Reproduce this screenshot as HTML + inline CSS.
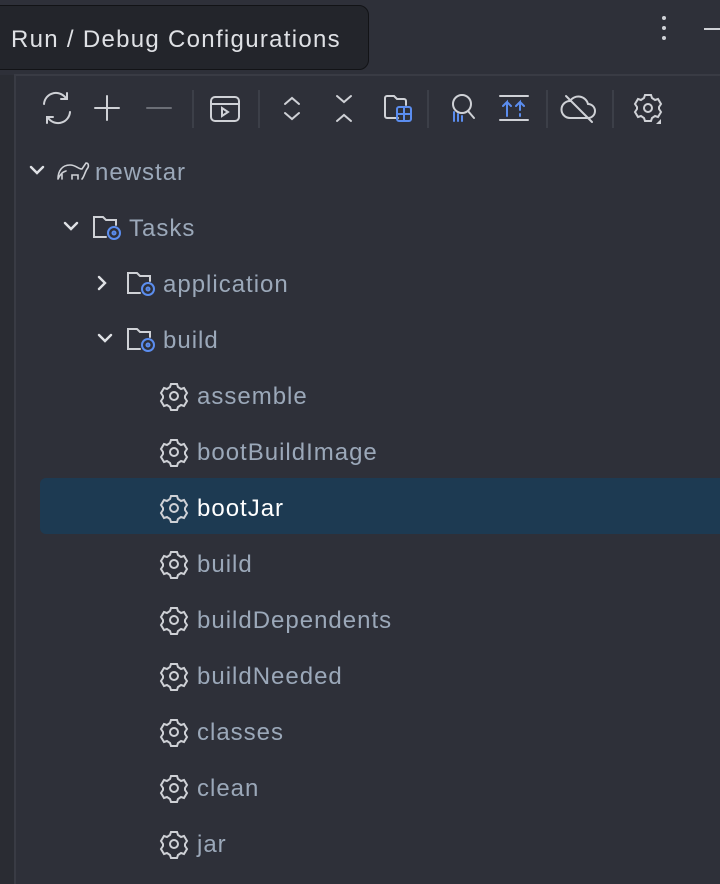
<!DOCTYPE html><html><head><style>
body{margin:0;width:720px;height:884px;background:#2e3039;font-family:"Liberation Sans",sans-serif;overflow:hidden;position:relative}
.strip{position:absolute;left:0;top:75px;width:14px;height:809px;background:#2a2c33;border-right:2px solid #393b44}
.tip{position:absolute;left:-10px;top:5px;width:379px;height:65px;background:#23252b;border:1px solid #121316;border-radius:10px;color:#dfe1e5;font-size:24px;letter-spacing:1.3px;line-height:68px;padding-left:20px;box-sizing:border-box}
.hline{position:absolute;left:14px;right:0;top:74px;height:2px;background:#393b44}
.row{position:absolute;left:0;width:720px;height:56px;color:#9ba8b9;font-size:24px;letter-spacing:1px;line-height:60px}
.row span{position:absolute}
.sel{background:#1d3a52;left:40px;width:680px;border-radius:6px 0 0 6px}
svg{position:absolute}
.sep{position:absolute;top:90px;width:2px;height:38px;background:#3c3f48}
</style></head><body>
<div class="strip"></div>
<div class="hline"></div>
<div class="tip">Run / Debug Configurations</div>
<div style="position:absolute;left:662px;top:16px;color:#ccc"><div style="width:4px;height:4px;border-radius:2px;background:#cfd1d6;margin-bottom:6px"></div><div style="width:4px;height:4px;border-radius:2px;background:#cfd1d6;margin-bottom:6px"></div><div style="width:4px;height:4px;border-radius:2px;background:#cfd1d6"></div></div>
<div style="position:absolute;left:704px;top:28px;width:16px;height:2px;background:#cfd1d6"></div>
<svg width="720" height="140" style="left:0;top:0" fill="none" stroke="#cfd1d6" stroke-width="2" stroke-linecap="round">
<path d="M44 104a12 12 0 0 1 20-8l3 3M70 112a12 12 0 0 1-20 8l-3-3M67 93v6h-6M47 123v-6h6"/>
<path d="M107 96v24M95 108h24"/>
<path d="M147 108h24" stroke="#6b6e76"/>
<rect x="211" y="97" width="28" height="24" rx="4"/><path d="M211 104h28M222 108v8l6-4z"/>
<path d="M285 104l7-6 7 6M285 113l7 6 7-6"/>
<path d="M337 96l7 6 7-6M337 121l7-6 7 6"/>
<path d="M398 118h-11a2 2 0 0 1-2-2V98a2 2 0 0 1 2-2h7l3 3h7a2 2 0 0 1 2 2v4"/>
<rect x="397" y="107" width="14" height="14" rx="2" stroke="#5b8def"/><path d="M404 107v14M397 114h14" stroke="#5b8def"/>
<circle cx="462" cy="104" r="9"/><path d="M468 111l6 7"/><path d="M454 112v9M458 114v7M462 116v5" stroke="#5b8def"/>
<path d="M500 96h28M500 120h28"/><path d="M507 116v-14l-4 4M507 102l4 4M520 116v-2M520 110v-8l-4 4M520 102l4 4" stroke="#5b8def"/>
<path d="M570 118h18a7 7 0 0 0 0-14 10 10 0 0 0-18-3 8 8 0 0 0 0 17zM566 96l26 26"/>
<circle cx="648" cy="108" r="4"/><path d="M645 95h6l1 3 3 2 3-1 3 5-2 3v2l2 3-3 5-3-1-3 2-1 3h-6l-1-3-3-2-3 1-3-5 2-3v-2l-2-3 3-5 3 1 3-2z"/><path d="M656 124l5-5v5z" fill="#cfd1d6" stroke="none"/>
</svg>
<div class="sep" style="left:192px"></div><div class="sep" style="left:258px"></div><div class="sep" style="left:427px"></div><div class="sep" style="left:546px"></div><div class="sep" style="left:612px"></div>
<svg width="720" height="360" style="left:0;top:140px" fill="none" stroke="#dfe1e5" stroke-width="2.4" stroke-linecap="round">
<path d="M31 27l6 6 6-6M65 83l6 6 6-6M99 137l6 6-6 6M99 195l6 6 6-6"/>
<g stroke="#cfd1d6" stroke-width="1.6"><path d="M58 39c0-8 4-14 12-14 6 0 8 4 12 4l4-6c3 0 3 4 1 6-2 3-3 8-5 10M62 39v-6M72 39v-4h6v4M66 31c-4 1-6 4-8 8"/></g>
<g stroke="#cfd1d6" stroke-width="2"><path d="M106 97H94V77h9l3 3h10v5"/><path d="M140 153h-12v-20h9l3 3h10v5"/><path d="M140 209h-12v-20h9l3 3h10v5"/></g>
<g stroke="#5b8def" stroke-width="2"><circle cx="114" cy="93" r="6"/><circle cx="114" cy="93" r="1.5"/><circle cx="148" cy="149" r="6"/><circle cx="148" cy="149" r="1.5"/><circle cx="148" cy="205" r="6"/><circle cx="148" cy="205" r="1.5"/></g>
</svg>
<div class="row" style="top:143px"><span style="left:95px">newstar</span></div>
<div class="row" style="top:199px"><span style="left:129px">Tasks</span></div>
<div class="row" style="top:255px"><span style="left:163px">application</span></div>
<div class="row" style="top:311px"><span style="left:163px">build</span></div>
<div class="row sel" style="top:478px"></div>
<div class="row" style="top:367px"><span style="left:197px">assemble</span></div>
<div class="row" style="top:423px"><span style="left:197px">bootBuildImage</span></div>
<div class="row" style="top:479px;color:#fff"><span style="left:197px">bootJar</span></div>
<div class="row" style="top:535px"><span style="left:197px">build</span></div>
<div class="row" style="top:591px"><span style="left:197px">buildDependents</span></div>
<div class="row" style="top:647px"><span style="left:197px">buildNeeded</span></div>
<div class="row" style="top:703px"><span style="left:197px">classes</span></div>
<div class="row" style="top:759px"><span style="left:197px">clean</span></div>
<div class="row" style="top:815px"><span style="left:197px">jar</span></div>
<svg width="40" height="500" style="left:154px;top:370px" fill="none" stroke="#cfd1d6" stroke-width="2">
<defs><g id="g"><circle cx="20" cy="26" r="4"/><path d="M17 14h6l1 3 3 2 3-1 3 5-2 3v2l2 3-3 5-3-1-3 2-1 3h-6l-1-3-3-2-3 1-3-5 2-3v-2l-2-3 3-5 3 1 3-2z"/></g></defs>
<use href="#g"/><use href="#g" y="56"/><use href="#g" y="112"/><use href="#g" y="168"/><use href="#g" y="224"/><use href="#g" y="280"/><use href="#g" y="336"/><use href="#g" y="392"/><use href="#g" y="448"/>
</svg>
</body></html>
